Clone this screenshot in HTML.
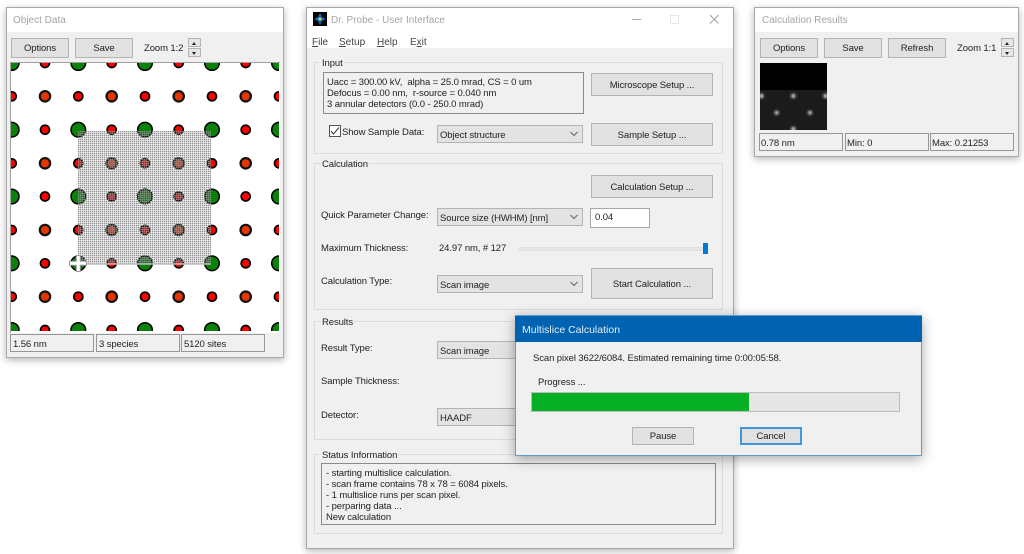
<!DOCTYPE html>
<html><head><meta charset="utf-8"><title>Dr. Probe</title>
<style>
html,body{margin:0;padding:0;width:1024px;height:554px;overflow:hidden;background:#fff}
#r{position:absolute;left:0;top:0;width:1024px;height:554px;filter:blur(.35px);font:9.500px/12px "Liberation Sans",sans-serif;letter-spacing:-.1px;color:#222}
#r div{position:absolute;box-sizing:border-box}
.w{background:#f0f0f0;border:1px solid #a9a9a9;box-shadow:0 2px 7px rgba(0,0,0,.3)}
.tb{background:#fff}
.t{white-space:nowrap;height:12px}
.ti{color:#a5a5a5;font-size:10px;letter-spacing:0}
.b{background:#e1e1e1;border:1px solid #b4b4b4;text-align:center;white-space:nowrap}
.c{background:#e3e3e3;border:1px solid #b4b4b4;padding-left:2px;line-height:19px;white-space:nowrap}
.c svg{position:absolute;right:4px;top:5px}
.g{border:1px solid #dcdcdc}
.g>span{position:absolute;left:6px;top:-5px;background:#f0f0f0;padding:0 1px;white-space:nowrap}
.s{border:1px solid #8a8a8a;background:#f0f0f0}
.st{border:1px solid #969696;background:#f0f0f0;line-height:19px;padding-left:2px;white-space:nowrap}
.sp{background:#e6e6e6;border:1px solid #b4b4b4}
.sp:after{content:"";position:absolute;left:3px;width:0;height:0;border-left:2.5px solid transparent;border-right:2.5px solid transparent}
.u:after{top:3px;border-bottom:3px solid #222}
.d:after{top:3px;border-top:3px solid #222}
.m{color:#444;font-size:10px;letter-spacing:0}
</style></head><body><div id="r">

<!-- Object Data -->
<div class="w" style="left:6px;top:7px;width:278px;height:351px"></div>
<div class="tb" style="left:7px;top:8px;width:276px;height:24px"></div>
<div class="t ti" style="left:13px;top:15px">Object Data</div>
<div class="b" style="left:11px;top:38px;width:58px;height:20px;line-height:20px">Options</div>
<div class="b" style="left:75px;top:38px;width:58px;height:20px;line-height:20px">Save</div>
<div class="t" style="left:144px;top:43px">Zoom 1:2</div>
<div class="sp u" style="left:188px;top:38px;width:13px;height:9px"></div>
<div class="sp d" style="left:188px;top:48px;width:13px;height:9px"></div>
<svg style="position:absolute;left:10px;top:62px" width="270" height="271" viewBox="10 62 270 271">
<defs>
<pattern id="m" x="78" y="131" width="2" height="2" patternUnits="userSpaceOnUse"><rect width="1.400" height="1.400" fill="#8c8c8c" fill-opacity=".96"/></pattern>
<clipPath id="cl"><rect x="11" y="63" width="268" height="268"/></clipPath>
<g id="G"><circle r="7.3" fill="#0a820a" stroke="#000" stroke-width="1.5"/></g>
<g id="R"><circle r="4.5" fill="#f00" stroke="#000" stroke-width="1.7"/></g>
<g id="D"><circle r="5.2" fill="#e63600" stroke="#111" stroke-width="2.2"/></g>
</defs>
<rect x="10" y="62" width="270" height="271" fill="#fff"/>
<path d="M10.5 333V62.500H280" fill="none" stroke="#a0a0a0"/>
<g clip-path="url(#cl)">
<use href="#G" x="11.700" y="63"/><use href="#R" x="45" y="63"/><use href="#G" x="78.300" y="63"/><use href="#R" x="111.700" y="63"/><use href="#G" x="145" y="63"/><use href="#R" x="178.700" y="63"/><use href="#G" x="212" y="63"/><use href="#R" x="245.700" y="63"/><use href="#G" x="279" y="63"/>
<use href="#R" x="11.700" y="96.300"/><use href="#D" x="45" y="96.300"/><use href="#R" x="78.300" y="96.300"/><use href="#D" x="111.700" y="96.300"/><use href="#R" x="145" y="96.300"/><use href="#D" x="178.700" y="96.300"/><use href="#R" x="212" y="96.300"/><use href="#D" x="245.700" y="96.300"/><use href="#R" x="279" y="96.300"/>
<use href="#G" x="11.700" y="129.700"/><use href="#R" x="45" y="129.700"/><use href="#G" x="78.300" y="129.700"/><use href="#R" x="111.700" y="129.700"/><use href="#G" x="145" y="129.700"/><use href="#R" x="178.700" y="129.700"/><use href="#G" x="212" y="129.700"/><use href="#R" x="245.700" y="129.700"/><use href="#G" x="279" y="129.700"/>
<use href="#R" x="11.700" y="163.300"/><use href="#D" x="45" y="163.300"/><use href="#R" x="78.300" y="163.300"/><use href="#D" x="111.700" y="163.300"/><use href="#R" x="145" y="163.300"/><use href="#D" x="178.700" y="163.300"/><use href="#R" x="212" y="163.300"/><use href="#D" x="245.700" y="163.300"/><use href="#R" x="279" y="163.300"/>
<use href="#G" x="11.700" y="196.500"/><use href="#R" x="45" y="196.500"/><use href="#G" x="78.300" y="196.500"/><use href="#R" x="111.700" y="196.500"/><use href="#G" x="145" y="196.500"/><use href="#R" x="178.700" y="196.500"/><use href="#G" x="212" y="196.500"/><use href="#R" x="245.700" y="196.500"/><use href="#G" x="279" y="196.500"/>
<use href="#R" x="11.700" y="230"/><use href="#D" x="45" y="230"/><use href="#R" x="78.300" y="230"/><use href="#D" x="111.700" y="230"/><use href="#R" x="145" y="230"/><use href="#D" x="178.700" y="230"/><use href="#R" x="212" y="230"/><use href="#D" x="245.700" y="230"/><use href="#R" x="279" y="230"/>
<use href="#G" x="11.700" y="263.300"/><use href="#R" x="45" y="263.300"/><use href="#G" x="78.300" y="263.300"/><use href="#R" x="111.700" y="263.300"/><use href="#G" x="145" y="263.300"/><use href="#R" x="178.700" y="263.300"/><use href="#G" x="212" y="263.300"/><use href="#R" x="245.700" y="263.300"/><use href="#G" x="279" y="263.300"/>
<use href="#R" x="11.700" y="296.700"/><use href="#D" x="45" y="296.700"/><use href="#R" x="78.300" y="296.700"/><use href="#D" x="111.700" y="296.700"/><use href="#R" x="145" y="296.700"/><use href="#D" x="178.700" y="296.700"/><use href="#R" x="212" y="296.700"/><use href="#D" x="245.700" y="296.700"/><use href="#R" x="279" y="296.700"/>
<use href="#G" x="11.700" y="330"/><use href="#R" x="45" y="330"/><use href="#G" x="78.300" y="330"/><use href="#R" x="111.700" y="330"/><use href="#G" x="145" y="330"/><use href="#R" x="178.700" y="330"/><use href="#G" x="212" y="330"/><use href="#R" x="245.700" y="330"/><use href="#G" x="279" y="330"/>
</g>
<rect x="78" y="131" width="133" height="133" fill="url(#m)"/>
<path d="M78 264H211" stroke="#bdbdbd" stroke-width="1.500"/>
<path d="M69 263.300H87M78.300 255V272" stroke="#9a9a9a" stroke-width="5"/>
<path d="M70 263.300H86M78.300 256V271" stroke="#fff" stroke-width="3"/>
</svg>
<div class="st" style="left:10px;top:334px;width:84px;height:18px">1.56 nm</div>
<div class="st" style="left:96px;top:334px;width:84px;height:18px">3 species</div>
<div class="st" style="left:181px;top:334px;width:84px;height:18px">5120 sites</div>

<!-- Main -->
<div class="w" style="left:306px;top:7px;width:428px;height:542px"></div>
<div class="tb" style="left:307px;top:8px;width:426px;height:40px"></div>
<svg style="position:absolute;left:313px;top:12px" width="14" height="14" viewBox="0 0 14 14"><defs><radialGradient id="ic"><stop offset="0" stop-color="#ff7a00"/><stop offset=".3" stop-color="#f2d030"/><stop offset=".55" stop-color="#1aa0c8"/><stop offset="1" stop-color="#0a1a80"/></radialGradient></defs><rect width="14" height="14" fill="#000"/><path d="M7 1L9 5L13 7L9 9L7 13L5 9L1 7L5 5Z" fill="url(#ic)"/><circle cx="7" cy="7" r="3.200" fill="url(#ic)"/></svg>
<div class="t ti" style="left:331px;top:15px">Dr. Probe - User Interface</div>
<svg style="position:absolute;left:625px;top:10px" width="100" height="20" viewBox="625 10 100 20"><path d="M632 19.500H641" stroke="#a8a8a8"/><rect x="670.500" y="15.500" width="8" height="8" fill="none" stroke="#e8e8e8"/><path d="M710 15L718.500 23.500M718.500 15L710 23.500" stroke="#a0a0a0"/></svg>
<div class="t m" style="left:312px;top:37px"><u>F</u>ile</div>
<div class="t m" style="left:339px;top:37px"><u>S</u>etup</div>
<div class="t m" style="left:377px;top:37px"><u>H</u>elp</div>
<div class="t m" style="left:410px;top:37px">E<u>x</u>it</div>

<div class="g" style="left:314px;top:62px;width:409px;height:92px"><span>Input</span></div>
<div class="s" style="left:323px;top:72px;width:261px;height:42px"></div>
<div class="t" style="left:327px;top:77px">Uacc = 300.00 kV,&nbsp; alpha = 25.0 mrad, CS = 0 um</div>
<div class="t" style="left:327px;top:88px">Defocus = 0.00 nm,&nbsp; r-source = 0.040 nm</div>
<div class="t" style="left:327px;top:99px">3 annular detectors (0.0 - 250.0 mrad)</div>
<div class="b" style="left:591px;top:73px;width:122px;height:23px;line-height:23px">Microscope Setup ...</div>
<svg style="position:absolute;left:329px;top:125px" width="12" height="13" viewBox="0 0 12 13"><rect x=".5" y=".5" width="11" height="11" fill="#fff" stroke="#555"/><path d="M2 6L4.500 9L10 2.500" fill="none" stroke="#333"/></svg>
<div class="t" style="left:342px;top:127px">Show Sample Data:</div>
<div class="c" style="left:437px;top:125px;width:146px;height:18px">Object structure<svg width="8" height="6"><path d="M.5 1L4 4.500L7.500 1" fill="none" stroke="#666"/></svg></div>
<div class="b" style="left:591px;top:123px;width:122px;height:23px;line-height:23px">Sample Setup ...</div>

<div class="g" style="left:314px;top:163px;width:409px;height:147px"><span>Calculation</span></div>
<div class="b" style="left:591px;top:175px;width:122px;height:23px;line-height:23px">Calculation Setup ...</div>
<div class="t" style="left:321px;top:210px">Quick Parameter Change:</div>
<div class="c" style="left:437px;top:208px;width:146px;height:18px">Source size (HWHM) [nm]<svg width="8" height="6"><path d="M.5 1L4 4.500L7.500 1" fill="none" stroke="#666"/></svg></div>
<div style="left:590px;top:208px;width:60px;height:20px;background:#fff;border:1px solid #a8a8a8;line-height:17px;padding-left:4px">0.04</div>
<div class="t" style="left:321px;top:243px">Maximum Thickness:</div>
<div class="t" style="left:439px;top:243px">24.97 nm, # 127</div>
<div style="left:519px;top:247px;width:187px;height:4px;background:#e7e7e7;border:1px solid #e0e0e0"></div>
<div style="left:703px;top:243px;width:5px;height:11px;background:#0078d7"></div>
<div class="t" style="left:321px;top:276px">Calculation Type:</div>
<div class="c" style="left:437px;top:275px;width:146px;height:18px">Scan image<svg width="8" height="6"><path d="M.5 1L4 4.500L7.500 1" fill="none" stroke="#666"/></svg></div>
<div class="b" style="left:591px;top:268px;width:122px;height:31px;line-height:31px">Start Calculation ...</div>

<div class="g" style="left:314px;top:321px;width:409px;height:119px"><span>Results</span></div>
<div class="t" style="left:321px;top:343px">Result Type:</div>
<div class="c" style="left:437px;top:341px;width:146px;height:18px">Scan image</div>
<div class="t" style="left:321px;top:376px">Sample Thickness:</div>
<div class="t" style="left:321px;top:410px">Detector:</div>
<div class="c" style="left:437px;top:408px;width:146px;height:18px">HAADF</div>

<div class="g" style="left:314px;top:454px;width:409px;height:80px"><span>Status Information</span></div>
<div class="s" style="left:321px;top:463px;width:395px;height:62px"></div>
<div class="t" style="left:326px;top:468px">- starting multislice calculation.</div>
<div class="t" style="left:326px;top:479px">- scan frame contains 78 x 78 = 6084 pixels.</div>
<div class="t" style="left:326px;top:490px">- 1 multislice runs per scan pixel.</div>
<div class="t" style="left:326px;top:501px">- perparing data ...</div>
<div class="t" style="left:326px;top:512px">New calculation</div>

<!-- Results window -->
<div class="w" style="left:754px;top:7px;width:265px;height:150px"></div>
<div class="tb" style="left:755px;top:8px;width:263px;height:24px"></div>
<div class="t ti" style="left:762px;top:15px">Calculation Results</div>
<div class="b" style="left:760px;top:38px;width:58px;height:20px;line-height:20px">Options</div>
<div class="b" style="left:824px;top:38px;width:58px;height:20px;line-height:20px">Save</div>
<div class="b" style="left:888px;top:38px;width:58px;height:20px;line-height:20px">Refresh</div>
<div class="t" style="left:957px;top:43px">Zoom 1:1</div>
<div class="sp u" style="left:1001px;top:38px;width:13px;height:9px"></div>
<div class="sp d" style="left:1001px;top:48px;width:13px;height:9px"></div>
<svg style="position:absolute;left:759px;top:62px" width="69" height="69" viewBox="759 62 69 69">
<defs><filter id="bl" x="-100%" y="-100%" width="300%" height="300%"><feGaussianBlur stdDeviation="1.400"/></filter><clipPath id="ci"><rect x="760" y="63" width="67" height="67"/></clipPath></defs>
<rect x="760" y="63" width="67" height="67" fill="#1b1b1b"/><rect x="760" y="63" width="67" height="27" fill="#000"/>
<g clip-path="url(#ci)"><g fill="#d8d8d8" filter="url(#bl)"><circle cx="761.500" cy="96" r="2.200"/><circle cx="793.300" cy="96" r="2.200"/><circle cx="825.500" cy="96" r="2.200"/><circle cx="776.700" cy="112.700" r="2"/><circle cx="810" cy="112.700" r="2"/><circle cx="793.300" cy="129" r="2.200"/></g></g>
</svg>
<div class="st" style="left:759px;top:133px;width:84px;height:18px;padding-left:1px">0.78 nm</div>
<div class="st" style="left:845px;top:133px;width:84px;height:18px;padding-left:1px">Min: 0</div>
<div class="st" style="left:930px;top:133px;width:84px;height:18px;padding-left:1px">Max: 0.21253</div>

<!-- Dialog -->
<div style="left:515px;top:315px;width:407px;height:141px;background:#f0f0f0;border:1px solid #5f9fd0;box-shadow:0 3px 12px rgba(0,0,0,.35)"></div>
<div style="left:515px;top:316px;width:407px;height:26px;background:#0063b1"></div>
<div class="t" style="left:522px;top:324px;color:#e4eef7;font-size:10.500px;letter-spacing:0">Multislice Calculation</div>
<div class="t" style="left:533px;top:353px">Scan pixel 3622/6084. Estimated remaining time 0:00:05:58.</div>
<div class="t" style="left:538px;top:377px">Progress ...</div>
<div style="left:531px;top:392px;width:369px;height:20px;background:#e6e6e6;border:1px solid #bcbcbc"></div>
<div style="left:532px;top:393px;width:217px;height:18px;background:#06b025"></div>
<div class="b" style="left:632px;top:427px;width:62px;height:18px;line-height:18px">Pause</div>
<div class="b" style="left:740px;top:427px;width:62px;height:18px;line-height:16px;border:2px solid #3f97dc">Cancel</div>

</div></body></html>
